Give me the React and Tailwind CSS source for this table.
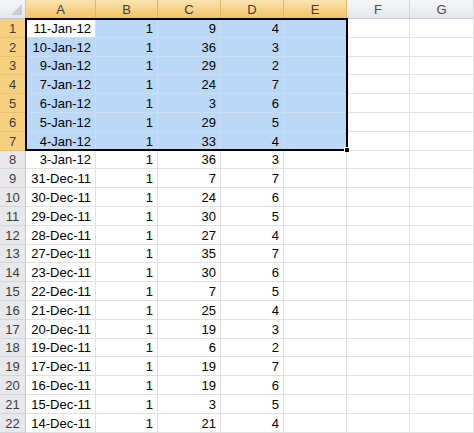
import React from "react";

const rows = [
  ["11-Jan-12", 1, 9, 4],
  ["10-Jan-12", 1, 36, 3],
  ["9-Jan-12", 1, 29, 2],
  ["7-Jan-12", 1, 24, 7],
  ["6-Jan-12", 1, 3, 6],
  ["5-Jan-12", 1, 29, 5],
  ["4-Jan-12", 1, 33, 4],
  ["3-Jan-12", 1, 36, 3],
  ["31-Dec-11", 1, 7, 7],
  ["30-Dec-11", 1, 24, 6],
  ["29-Dec-11", 1, 30, 5],
  ["28-Dec-11", 1, 27, 4],
  ["27-Dec-11", 1, 35, 7],
  ["23-Dec-11", 1, 30, 6],
  ["22-Dec-11", 1, 7, 5],
  ["21-Dec-11", 1, 25, 4],
  ["20-Dec-11", 1, 19, 3],
  ["19-Dec-11", 1, 6, 2],
  ["17-Dec-11", 1, 19, 7],
  ["16-Dec-11", 1, 19, 6],
  ["15-Dec-11", 1, 3, 5],
  ["14-Dec-11", 1, 21, 4],
];

const cols = ["A", "B", "C", "D", "E", "F", "G"];

function ColHeader({ label, selected }) {
  return (
    <div
      className={
        selected
          ? "flex items-center justify-center border-r border-b border-r-[#e2b563] border-b-[#c89a3c] bg-gradient-to-b from-[#fae3b0] to-[#f2c462] text-[#3c3c3c]"
          : "flex items-center justify-center border-r border-b border-r-[#d5d8dd] border-b-[#c5c9cf] bg-gradient-to-b from-[#f5f6f8] to-[#e4e7eb] text-[#4a4a4a]"
      }
    >
      {label}
    </div>
  );
}

function RowHeader({ n, selected }) {
  return (
    <div
      className={
        selected
          ? "flex items-end justify-center border-r border-b border-r-[#c89a3c] border-b-[#e9c170] bg-[#f6cf7f] pb-[2px] text-[#3c3c3c]"
          : "flex items-end justify-center border-r border-b border-r-[#c5c9cf] border-b-[#d3d6db] bg-[#e6e8ec] pb-[2px] text-[#3c3c3c]"
      }
    >
      {n}
    </div>
  );
}

function Cell({ value, selected, active }) {
  const bg = selected && !active ? "bg-[#bcd8f7]" : "bg-white";
  const line = selected ? "border-[#c8def5]" : "border-[#e1e1e1]";
  return (
    <div className={`flex items-end justify-end overflow-hidden whitespace-nowrap border-r border-b pb-[2px] pr-[4px] text-black ${bg} ${line}`}>
      {value}
    </div>
  );
}

export default function App() {
  return (
    <div className="relative h-[433px] w-[474px] overflow-hidden bg-white font-['Liberation_Sans',Arial,sans-serif] text-[13px] leading-none">
      <div className="grid grid-cols-[26px_70px_62px_63px_63px_63px_63px_64px] grid-rows-[19px_repeat(22,18.8px)]">
        <div className="relative border-r border-b border-r-[#c5c9cf] border-b-[#c5c9cf] bg-gradient-to-b from-[#f5f6f8] to-[#e4e7eb]">
          <div className="absolute right-[3px] bottom-[3px] h-0 w-0 border-b-[11px] border-l-[11px] border-b-[#c9ccd1] border-l-transparent" />
        </div>
        {cols.map((c, i) => (
          <ColHeader key={c} label={c} selected={i < 5} />
        ))}
        {rows.map((r, ri) => {
          const sel = ri < 7;
          return (
            <React.Fragment key={ri}>
              <RowHeader n={ri + 1} selected={sel} />
              {r.map((v, ci) => (
                <Cell key={ci} value={v} selected={sel} active={ri === 0 && ci === 0} />
              ))}
              <Cell value="" selected={sel} />
              <Cell value="" selected={false} />
              <Cell value="" selected={false} />
            </React.Fragment>
          );
        })}
      </div>
      <div className="pointer-events-none absolute left-[25px] top-[18px] h-[133px] w-[323px] border-2 border-black">
        <div className="absolute -right-[4px] -bottom-[4px] h-[6px] w-[6px] border border-white bg-black" />
      </div>
    </div>
  );
}
